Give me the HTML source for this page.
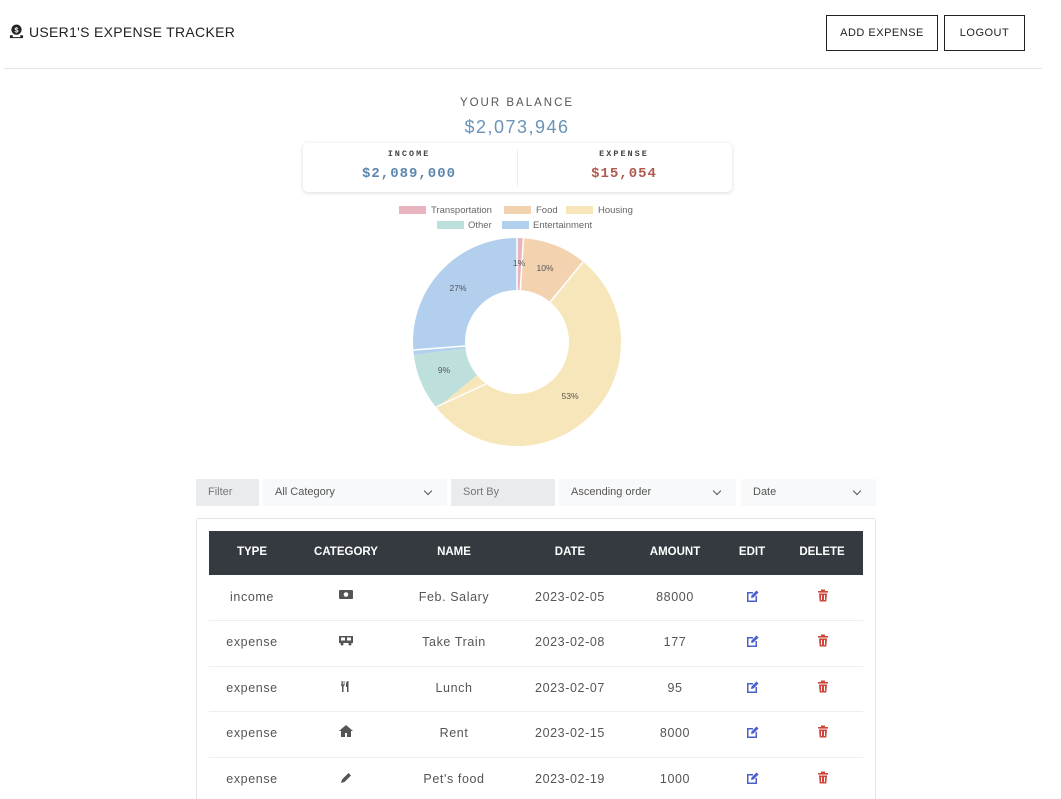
<!DOCTYPE html>
<html><head><meta charset="utf-8"><style>
*{margin:0;padding:0;box-sizing:border-box}
html,body{width:1061px;height:799px;overflow:hidden}
body{background:#fff;font-family:"Liberation Sans",sans-serif;color:#333;position:relative}
.a{position:absolute}
.btn{position:absolute;top:15px;height:36px;border:1px solid #222;font-size:11px;letter-spacing:.5px;display:flex;align-items:center;justify-content:center;color:#222}
.c{position:absolute;text-align:center;transform:translateX(-50%);white-space:nowrap}
.sel{position:absolute;top:479px;height:27px;background:#f8f9fa;font-size:11px;color:#555;padding-left:12px;line-height:27px}
.lab{background:#e9ecef;color:#777}
.chev{position:absolute;right:16px;top:9px;width:6px;height:6px;border-right:1.5px solid #555;border-bottom:1.5px solid #555;transform:rotate(45deg)}
.th{position:absolute;top:546px;color:#fff;font-size:11.5px;font-weight:bold;transform:translateX(-50%)}
.td{position:absolute;font-size:12.5px;color:#555;transform:translateX(-50%);letter-spacing:.6px;white-space:nowrap}
.line{position:absolute;left:209px;width:654px;height:1px;background:#eee}
</style></head><body>
<svg class="a" style="left:9px;top:24px" width="15" height="15" viewBox="0 0 16 16"><circle cx="8" cy="6" r="5.5" fill="#222"/><text x="8" y="9" font-size="8" fill="#fff" text-anchor="middle" font-family="Liberation Sans" font-weight="bold">$</text><path d="M1 12h3v2h8v-2h3v3H1z" fill="#222"/></svg>
<div class="a" style="left:29px;top:24px;font-size:14px;letter-spacing:.3px;color:#222">USER1'S EXPENSE TRACKER</div>
<div class="btn" style="left:826px;width:112px">ADD EXPENSE</div>
<div class="btn" style="left:944px;width:81px">LOGOUT</div>
<div class="a" style="left:4px;top:68px;width:1038px;height:1px;background:#e6e6e6"></div>

<div class="c" style="left:517px;top:97px;font-size:11.5px;letter-spacing:2px;color:#555">YOUR BALANCE</div>
<div class="c" style="left:517px;top:117px;font-size:18px;letter-spacing:1.5px;color:#6a93b8">$2,073,946</div>
<div class="a" style="left:303px;top:143px;width:429px;height:49px;border-radius:5px;box-shadow:0 1px 4px rgba(0,0,0,.15)"></div>
<div class="a" style="left:517px;top:150px;width:1px;height:36px;background:#eee"></div>
<div class="c" style="left:409px;top:149px;font-family:'Liberation Mono',monospace;font-size:8.5px;font-weight:bold;letter-spacing:2px;color:#444">INCOME</div>
<div class="c" style="left:409px;top:166px;font-family:'Liberation Mono',monospace;font-size:14px;font-weight:bold;letter-spacing:1px;color:#5c87ae">$2,089,000</div>
<div class="c" style="left:624px;top:149px;font-family:'Liberation Mono',monospace;font-size:8.5px;font-weight:bold;letter-spacing:2px;color:#444">EXPENSE</div>
<div class="c" style="left:624px;top:166px;font-family:'Liberation Mono',monospace;font-size:14px;font-weight:bold;letter-spacing:1px;color:#b05a4f">$15,054</div>

<svg class="a" style="left:0;top:0" width="1061" height="470" font-family="Liberation Sans" font-size="9.5" fill="#666">
<rect x="399" y="206" width="27" height="8" fill="#e8b4c0"/><text x="431" y="213">Transportation</text>
<rect x="504" y="206" width="27" height="8" fill="#f3d2b0"/><text x="536" y="213">Food</text>
<rect x="566" y="206" width="27" height="8" fill="#f8e6bb"/><text x="598" y="213">Housing</text>
<rect x="437" y="221" width="27" height="8" fill="#bde0dc"/><text x="468" y="228">Other</text>
<rect x="502" y="221" width="27" height="8" fill="#b3cfee"/><text x="533" y="228">Entertainment</text>
<g transform="rotate(-90 517 342)" fill="none" stroke-width="52">
<circle cx="517" cy="342" r="78" stroke="#e8b4c0" stroke-dasharray="4.9 490.09"/>
<circle cx="517" cy="342" r="78" stroke="#f3d2b0" stroke-dasharray="49.01 490.09" stroke-dashoffset="-4.9"/>
<circle cx="517" cy="342" r="78" stroke="#f8e6bb" stroke-dasharray="259.75 490.09" stroke-dashoffset="-53.91"/>
<circle cx="517" cy="342" r="78" stroke="#bde0dc" stroke-dasharray="44.11 490.09" stroke-dashoffset="-313.66"/>
<circle cx="517" cy="342" r="78" stroke="#b3cfee" stroke-dasharray="132.32 490.09" stroke-dashoffset="-357.77"/>
</g>
<g stroke="#fff" stroke-width="1.5">
<line x1="517" y1="290" x2="517" y2="238"/><line x1="520.3" y1="290.1" x2="523.5" y2="238.2"/>
<line x1="550.1" y1="302" x2="583" y2="262"/><line x1="486" y1="384" x2="436" y2="407"/><line x1="465.3" y1="346" x2="413.5" y2="350"/>
</g>
<g fill="#555" font-size="8.5" text-anchor="middle">
<text x="519" y="266">1%</text><text x="545" y="271">10%</text><text x="458" y="291">27%</text><text x="444" y="373">9%</text><text x="570" y="399">53%</text>
</g>
</svg>

<div class="sel lab" style="left:196px;width:63px">Filter</div>
<div class="sel" style="left:263px;width:184px">All Category<span class="chev"></span></div>
<div class="sel lab" style="left:451px;width:104px">Sort By</div>
<div class="sel" style="left:559px;width:177px">Ascending order<span class="chev"></span></div>
<div class="sel" style="left:741px;width:135px">Date<span class="chev"></span></div>

<div class="a" style="left:196px;top:518px;width:680px;height:290px;border:1px solid #e3e3e3;border-radius:3px"></div>
<div class="a" style="left:209px;top:531px;width:654px;height:44px;background:#343a40"></div>
<div class="th" style="left:252px">TYPE</div><div class="th" style="left:346px">CATEGORY</div><div class="th" style="left:454px">NAME</div><div class="th" style="left:570px">DATE</div><div class="th" style="left:675px">AMOUNT</div><div class="th" style="left:752px">EDIT</div><div class="th" style="left:822px">DELETE</div>
<div class="line" style="top:620px"></div><div class="line" style="top:666px"></div><div class="line" style="top:711px"></div><div class="line" style="top:757px"></div>

<div class="td" style="left:252px;top:590px">income</div><div class="td" style="left:454px;top:590px">Feb. Salary</div><div class="td" style="left:570px;top:590px">2023-02-05</div><div class="td" style="left:675px;top:590px">88000</div>
<div class="td" style="left:252px;top:635px">expense</div><div class="td" style="left:454px;top:635px">Take Train</div><div class="td" style="left:570px;top:635px">2023-02-08</div><div class="td" style="left:675px;top:635px">177</div>
<div class="td" style="left:252px;top:681px">expense</div><div class="td" style="left:454px;top:681px">Lunch</div><div class="td" style="left:570px;top:681px">2023-02-07</div><div class="td" style="left:675px;top:681px">95</div>
<div class="td" style="left:252px;top:726px">expense</div><div class="td" style="left:454px;top:726px">Rent</div><div class="td" style="left:570px;top:726px">2023-02-15</div><div class="td" style="left:675px;top:726px">8000</div>
<div class="td" style="left:252px;top:772px">expense</div><div class="td" style="left:454px;top:772px">Pet's food</div><div class="td" style="left:570px;top:772px">2023-02-19</div><div class="td" style="left:675px;top:772px">1000</div>

<svg class="a" style="left:0;top:0" width="1061" height="799">
<defs>
<g id="ed"><path d="M1 3h6v1.5H2.5v7h7V7H11v6H1z" fill="#4a5fc9"/><path d="M5 9l.5-2.5L10.5 1.5l2 2L7.5 8.5z" fill="#4a5fc9"/></g>
<g id="tr" fill="#d0453a"><rect x="1" y="2" width="10" height="1.6"/><rect x="4" y="0.5" width="4" height="1.5"/><path d="M2 4.5h8l-.7 8H2.7z"/><rect x="4" y="6" width="1" height="5" fill="#fff"/><rect x="7" y="6" width="1" height="5" fill="#fff"/></g>
</defs>
<g transform="translate(746,589)"><use href="#ed"/></g><g transform="translate(746,634)"><use href="#ed"/></g><g transform="translate(746,680)"><use href="#ed"/></g><g transform="translate(746,725)"><use href="#ed"/></g><g transform="translate(746,771)"><use href="#ed"/></g>
<g transform="translate(817,589)"><use href="#tr"/></g><g transform="translate(817,634)"><use href="#tr"/></g><g transform="translate(817,680)"><use href="#tr"/></g><g transform="translate(817,725)"><use href="#tr"/></g><g transform="translate(817,771)"><use href="#tr"/></g>
<g fill="#555">
<rect x="339" y="590" width="14" height="9" rx="1"/><circle cx="346" cy="594.5" r="2.3" fill="#fff"/>
<path d="M339 636h14v7h-14z" rx="2"/><rect x="341" y="637.5" width="4" height="3" fill="#fff"/><rect x="347" y="637.5" width="4" height="3" fill="#fff"/><circle cx="342" cy="644" r="1.5"/><circle cx="350" cy="644" r="1.5"/>
<path d="M341 681v4a1.5 1.5 0 0 0 1 1.4V692h1.5v-5.6a1.5 1.5 0 0 0 1-1.4v-4h-.8v3.5h-.7V681h-.8v3.5h-.7V681z"/><path d="M347 692v-5h-1v-3c0-2 1-3 2.5-3V692z"/>
<path d="M346 725l-7 6h2v6h4v-4h2v4h4v-6h2z"/>
<path d="M341 783l1-3.5 6.5-6.5 2.5 2.5-6.5 6.5z"/>
</g>
</svg>
</body></html>
